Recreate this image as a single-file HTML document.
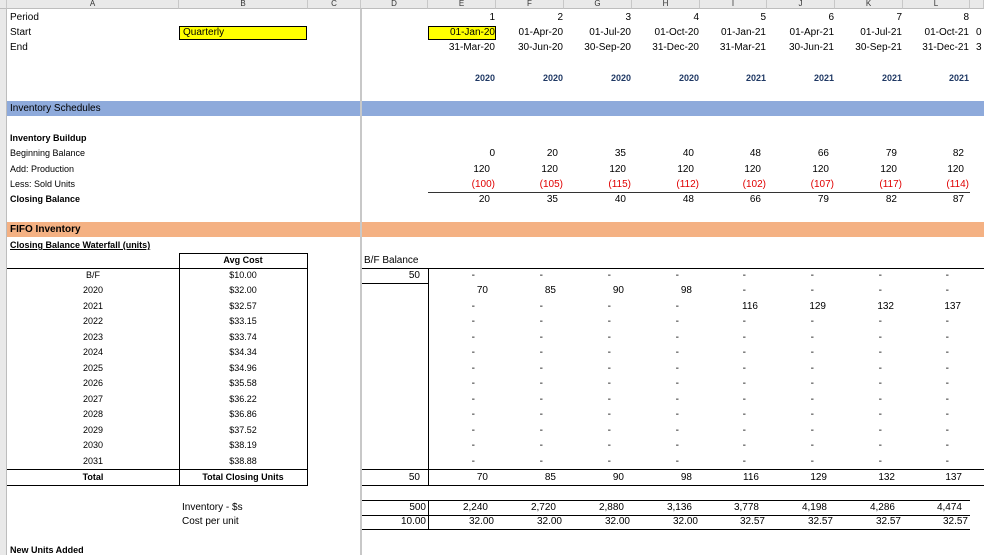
<!DOCTYPE html>
<html><head><meta charset="utf-8"><style>
*{margin:0;padding:0;box-sizing:border-box}
body{width:984px;height:555px;overflow:hidden;background:#fff;font-family:"Liberation Sans",Arial,sans-serif;font-size:10px;color:#000;position:relative}
div{position:absolute;white-space:nowrap}
.t{height:15px;line-height:15px}
.r{text-align:right;width:70px}
.c{text-align:center}
.b{font-weight:bold}
.h{top:0;height:9px;background:#e9e9e9;border-bottom:1px solid #bdbdbd;border-right:1px solid #c8c8c8;font-size:8px;line-height:7px;text-align:center;color:#333;overflow:hidden}
.hl{height:1px;background:#000}
.vl{width:1px;background:#000}
.y{color:#1f3864;font-weight:bold;font-size:9px}
.red{color:#e00000}
</style></head><body>
<!-- column headers -->
<div class="h" style="left:0;width:7px"></div>
<div class="h" style="left:7px;width:172px">A</div>
<div class="h" style="left:179px;width:129px">B</div>
<div class="h" style="left:308px;width:53px">C</div>
<div class="h" style="left:361px;width:67px">D</div>
<div class="h" style="left:428px;width:68px">E</div>
<div class="h" style="left:496px;width:68px">F</div>
<div class="h" style="left:564px;width:68px">G</div>
<div class="h" style="left:632px;width:68px">H</div>
<div class="h" style="left:700px;width:67px">I</div>
<div class="h" style="left:767px;width:68px">J</div>
<div class="h" style="left:835px;width:68px">K</div>
<div class="h" style="left:903px;width:67px">L</div>
<div class="h" style="left:970px;width:14px"></div>
<!-- row gutter -->
<div style="left:0;top:9px;width:7px;height:546px;background:#e9e9e9;border-right:1px solid #bdbdbd"></div>
<!-- freeze line -->
<div style="left:360px;top:9px;width:2px;height:546px;background:#c8c8c8"></div>

<!-- bands -->
<div style="left:7px;top:101px;width:353px;height:15px;background:#8eaadb"></div>
<div style="left:362px;top:101px;width:622px;height:15px;background:#8eaadb"></div>
<div class="t" style="left:10px;top:101px">Inventory Schedules</div>
<div style="left:7px;top:222px;width:353px;height:15px;background:#f4b183"></div>
<div style="left:362px;top:222px;width:622px;height:15px;background:#f4b183"></div>
<div class="t b" style="left:10px;top:222px">FIFO Inventory</div>

<!-- top labels -->
<div class="t" style="left:10px;top:10px">Period</div>
<div class="t" style="left:10px;top:25px">Start</div>
<div class="t" style="left:10px;top:40px">End</div>
<div style="left:179px;top:26px;width:128px;height:14px;background:#ffff00;border:1px solid #000;line-height:12px;padding-left:3px">Quarterly</div>
<div style="left:428px;top:26px;width:68px;height:14px;background:#ffff00;border:1px solid #000"></div>

<!-- period row -->
<div class="t r" style="left:425px;top:10px">1</div>
<div class="t r" style="left:493px;top:10px">2</div>
<div class="t r" style="left:561px;top:10px">3</div>
<div class="t r" style="left:629px;top:10px">4</div>
<div class="t r" style="left:696px;top:10px">5</div>
<div class="t r" style="left:764px;top:10px">6</div>
<div class="t r" style="left:832px;top:10px">7</div>
<div class="t r" style="left:899px;top:10px">8</div>
<div class="t r" style="left:425px;top:25px">01-Jan-20</div>
<div class="t r" style="left:493px;top:25px">01-Apr-20</div>
<div class="t r" style="left:561px;top:25px">01-Jul-20</div>
<div class="t r" style="left:629px;top:25px">01-Oct-20</div>
<div class="t r" style="left:696px;top:25px">01-Jan-21</div>
<div class="t r" style="left:764px;top:25px">01-Apr-21</div>
<div class="t r" style="left:832px;top:25px">01-Jul-21</div>
<div class="t r" style="left:899px;top:25px">01-Oct-21</div>
<div class="t" style="left:976px;top:25px">0</div>
<div class="t r" style="left:425px;top:40px">31-Mar-20</div>
<div class="t r" style="left:493px;top:40px">30-Jun-20</div>
<div class="t r" style="left:561px;top:40px">30-Sep-20</div>
<div class="t r" style="left:629px;top:40px">31-Dec-20</div>
<div class="t r" style="left:696px;top:40px">31-Mar-21</div>
<div class="t r" style="left:764px;top:40px">30-Jun-21</div>
<div class="t r" style="left:832px;top:40px">30-Sep-21</div>
<div class="t r" style="left:899px;top:40px">31-Dec-21</div>
<div class="t" style="left:976px;top:40px">3</div>
<div class="t r y" style="left:425px;top:71px">2020</div>
<div class="t r y" style="left:493px;top:71px">2020</div>
<div class="t r y" style="left:561px;top:71px">2020</div>
<div class="t r y" style="left:629px;top:71px">2020</div>
<div class="t r y" style="left:696px;top:71px">2021</div>
<div class="t r y" style="left:764px;top:71px">2021</div>
<div class="t r y" style="left:832px;top:71px">2021</div>
<div class="t r y" style="left:899px;top:71px">2021</div>

<!-- inventory buildup -->
<div class="t b" style="left:10px;top:131px;font-size:9px">Inventory Buildup</div>
<div class="t" style="left:10px;top:146px;font-size:9px">Beginning Balance</div>
<div class="t" style="left:10px;top:162px;font-size:9px">Add: Production</div>
<div class="t" style="left:10px;top:177px;font-size:9px">Less: Sold Units</div>
<div class="t b" style="left:10px;top:192px;font-size:9px">Closing Balance</div>

<div class="t r" style="left:425px;top:146px">0</div>
<div class="t r" style="left:488px;top:146px">20</div>
<div class="t r" style="left:556px;top:146px">35</div>
<div class="t r" style="left:624px;top:146px">40</div>
<div class="t r" style="left:691px;top:146px">48</div>
<div class="t r" style="left:759px;top:146px">66</div>
<div class="t r" style="left:827px;top:146px">79</div>
<div class="t r" style="left:894px;top:146px">82</div>

<div class="t r" style="left:420px;top:162px">120</div>
<div class="t r" style="left:488px;top:162px">120</div>
<div class="t r" style="left:556px;top:162px">120</div>
<div class="t r" style="left:624px;top:162px">120</div>
<div class="t r" style="left:691px;top:162px">120</div>
<div class="t r" style="left:759px;top:162px">120</div>
<div class="t r" style="left:827px;top:162px">120</div>
<div class="t r" style="left:894px;top:162px">120</div>

<div class="t r red" style="left:425px;top:177px">(100)</div>
<div class="t r red" style="left:493px;top:177px">(105)</div>
<div class="t r red" style="left:561px;top:177px">(115)</div>
<div class="t r red" style="left:629px;top:177px">(112)</div>
<div class="t r red" style="left:696px;top:177px">(102)</div>
<div class="t r red" style="left:764px;top:177px">(107)</div>
<div class="t r red" style="left:832px;top:177px">(117)</div>
<div class="t r red" style="left:899px;top:177px">(114)</div>
<div class="hl" style="left:428px;top:192px;width:542px;background:#333"></div>

<div class="t r" style="left:420px;top:192px">20</div>
<div class="t r" style="left:488px;top:192px">35</div>
<div class="t r" style="left:556px;top:192px">40</div>
<div class="t r" style="left:624px;top:192px">48</div>
<div class="t r" style="left:691px;top:192px">66</div>
<div class="t r" style="left:759px;top:192px">79</div>
<div class="t r" style="left:827px;top:192px">82</div>
<div class="t r" style="left:894px;top:192px">87</div>

<!-- waterfall -->
<div class="t b" style="left:10px;top:238px;font-size:9px;text-decoration:underline">Closing Balance Waterfall (units)</div>
<div class="t" style="left:364px;top:253px">B/F Balance</div>
<!-- left tables -->
<div class="hl" style="left:179px;top:253px;width:129px"></div>
<div class="hl" style="left:7px;top:268px;width:301px"></div>
<div class="vl" style="left:179px;top:253px;height:232px"></div>
<div class="vl" style="left:307px;top:253px;height:232px"></div>
<div class="hl" style="left:7px;top:469px;width:301px"></div>
<div class="hl" style="left:7px;top:485px;width:301px"></div>
<div class="t c b" style="left:179px;top:253px;width:128px;font-size:9px">Avg Cost</div>

<div class="t c" style="left:7px;top:268px;width:172px;font-size:9px">B/F</div>
<div class="t c" style="left:7px;top:283px;width:172px;font-size:9px">2020</div>
<div class="t c" style="left:7px;top:299px;width:172px;font-size:9px">2021</div>
<div class="t c" style="left:7px;top:314px;width:172px;font-size:9px">2022</div>
<div class="t c" style="left:7px;top:330px;width:172px;font-size:9px">2023</div>
<div class="t c" style="left:7px;top:345px;width:172px;font-size:9px">2024</div>
<div class="t c" style="left:7px;top:361px;width:172px;font-size:9px">2025</div>
<div class="t c" style="left:7px;top:376px;width:172px;font-size:9px">2026</div>
<div class="t c" style="left:7px;top:392px;width:172px;font-size:9px">2027</div>
<div class="t c" style="left:7px;top:407px;width:172px;font-size:9px">2028</div>
<div class="t c" style="left:7px;top:423px;width:172px;font-size:9px">2029</div>
<div class="t c" style="left:7px;top:438px;width:172px;font-size:9px">2030</div>
<div class="t c" style="left:7px;top:454px;width:172px;font-size:9px">2031</div>
<div class="t c b" style="left:7px;top:470px;width:172px;font-size:9px">Total</div>

<div class="t c" style="left:179px;top:268px;width:128px;font-size:9px">$10.00</div>
<div class="t c" style="left:179px;top:283px;width:128px;font-size:9px">$32.00</div>
<div class="t c" style="left:179px;top:299px;width:128px;font-size:9px">$32.57</div>
<div class="t c" style="left:179px;top:314px;width:128px;font-size:9px">$33.15</div>
<div class="t c" style="left:179px;top:330px;width:128px;font-size:9px">$33.74</div>
<div class="t c" style="left:179px;top:345px;width:128px;font-size:9px">$34.34</div>
<div class="t c" style="left:179px;top:361px;width:128px;font-size:9px">$34.96</div>
<div class="t c" style="left:179px;top:376px;width:128px;font-size:9px">$35.58</div>
<div class="t c" style="left:179px;top:392px;width:128px;font-size:9px">$36.22</div>
<div class="t c" style="left:179px;top:407px;width:128px;font-size:9px">$36.86</div>
<div class="t c" style="left:179px;top:423px;width:128px;font-size:9px">$37.52</div>
<div class="t c" style="left:179px;top:438px;width:128px;font-size:9px">$38.19</div>
<div class="t c" style="left:179px;top:454px;width:128px;font-size:9px">$38.88</div>
<div class="t c b" style="left:179px;top:470px;width:128px;font-size:9px">Total Closing Units</div>

<!-- right waterfall lines -->
<div class="hl" style="left:362px;top:268px;width:622px"></div>
<div class="hl" style="left:362px;top:283px;width:66px"></div>
<div class="vl" style="left:428px;top:268px;height:217px"></div>
<div class="hl" style="left:362px;top:469px;width:622px"></div>
<div class="hl" style="left:362px;top:485px;width:622px"></div>
<div class="t r" style="left:350px;top:268px">50</div>

<!-- dashes/values rows -->
<div class="t r" style="left:405px;top:268px">-</div><div class="t r" style="left:473px;top:268px">-</div><div class="t r" style="left:541px;top:268px">-</div><div class="t r" style="left:609px;top:268px">-</div><div class="t r" style="left:676px;top:268px">-</div><div class="t r" style="left:744px;top:268px">-</div><div class="t r" style="left:812px;top:268px">-</div><div class="t r" style="left:879px;top:268px">-</div>
<div class="t r" style="left:418px;top:283px">70</div><div class="t r" style="left:486px;top:283px">85</div><div class="t r" style="left:554px;top:283px">90</div><div class="t r" style="left:622px;top:283px">98</div><div class="t r" style="left:676px;top:283px">-</div><div class="t r" style="left:744px;top:283px">-</div><div class="t r" style="left:812px;top:283px">-</div><div class="t r" style="left:879px;top:283px">-</div>
<div class="t r" style="left:405px;top:299px">-</div><div class="t r" style="left:473px;top:299px">-</div><div class="t r" style="left:541px;top:299px">-</div><div class="t r" style="left:609px;top:299px">-</div><div class="t r" style="left:688px;top:299px">116</div><div class="t r" style="left:756px;top:299px">129</div><div class="t r" style="left:824px;top:299px">132</div><div class="t r" style="left:891px;top:299px">137</div>
<div class="t r" style="left:405px;top:314px">-</div><div class="t r" style="left:473px;top:314px">-</div><div class="t r" style="left:541px;top:314px">-</div><div class="t r" style="left:609px;top:314px">-</div><div class="t r" style="left:676px;top:314px">-</div><div class="t r" style="left:744px;top:314px">-</div><div class="t r" style="left:812px;top:314px">-</div><div class="t r" style="left:879px;top:314px">-</div>
<div class="t r" style="left:405px;top:330px">-</div><div class="t r" style="left:473px;top:330px">-</div><div class="t r" style="left:541px;top:330px">-</div><div class="t r" style="left:609px;top:330px">-</div><div class="t r" style="left:676px;top:330px">-</div><div class="t r" style="left:744px;top:330px">-</div><div class="t r" style="left:812px;top:330px">-</div><div class="t r" style="left:879px;top:330px">-</div>
<div class="t r" style="left:405px;top:345px">-</div><div class="t r" style="left:473px;top:345px">-</div><div class="t r" style="left:541px;top:345px">-</div><div class="t r" style="left:609px;top:345px">-</div><div class="t r" style="left:676px;top:345px">-</div><div class="t r" style="left:744px;top:345px">-</div><div class="t r" style="left:812px;top:345px">-</div><div class="t r" style="left:879px;top:345px">-</div>
<div class="t r" style="left:405px;top:361px">-</div><div class="t r" style="left:473px;top:361px">-</div><div class="t r" style="left:541px;top:361px">-</div><div class="t r" style="left:609px;top:361px">-</div><div class="t r" style="left:676px;top:361px">-</div><div class="t r" style="left:744px;top:361px">-</div><div class="t r" style="left:812px;top:361px">-</div><div class="t r" style="left:879px;top:361px">-</div>
<div class="t r" style="left:405px;top:376px">-</div><div class="t r" style="left:473px;top:376px">-</div><div class="t r" style="left:541px;top:376px">-</div><div class="t r" style="left:609px;top:376px">-</div><div class="t r" style="left:676px;top:376px">-</div><div class="t r" style="left:744px;top:376px">-</div><div class="t r" style="left:812px;top:376px">-</div><div class="t r" style="left:879px;top:376px">-</div>
<div class="t r" style="left:405px;top:392px">-</div><div class="t r" style="left:473px;top:392px">-</div><div class="t r" style="left:541px;top:392px">-</div><div class="t r" style="left:609px;top:392px">-</div><div class="t r" style="left:676px;top:392px">-</div><div class="t r" style="left:744px;top:392px">-</div><div class="t r" style="left:812px;top:392px">-</div><div class="t r" style="left:879px;top:392px">-</div>
<div class="t r" style="left:405px;top:407px">-</div><div class="t r" style="left:473px;top:407px">-</div><div class="t r" style="left:541px;top:407px">-</div><div class="t r" style="left:609px;top:407px">-</div><div class="t r" style="left:676px;top:407px">-</div><div class="t r" style="left:744px;top:407px">-</div><div class="t r" style="left:812px;top:407px">-</div><div class="t r" style="left:879px;top:407px">-</div>
<div class="t r" style="left:405px;top:423px">-</div><div class="t r" style="left:473px;top:423px">-</div><div class="t r" style="left:541px;top:423px">-</div><div class="t r" style="left:609px;top:423px">-</div><div class="t r" style="left:676px;top:423px">-</div><div class="t r" style="left:744px;top:423px">-</div><div class="t r" style="left:812px;top:423px">-</div><div class="t r" style="left:879px;top:423px">-</div>
<div class="t r" style="left:405px;top:438px">-</div><div class="t r" style="left:473px;top:438px">-</div><div class="t r" style="left:541px;top:438px">-</div><div class="t r" style="left:609px;top:438px">-</div><div class="t r" style="left:676px;top:438px">-</div><div class="t r" style="left:744px;top:438px">-</div><div class="t r" style="left:812px;top:438px">-</div><div class="t r" style="left:879px;top:438px">-</div>
<div class="t r" style="left:405px;top:454px">-</div><div class="t r" style="left:473px;top:454px">-</div><div class="t r" style="left:541px;top:454px">-</div><div class="t r" style="left:609px;top:454px">-</div><div class="t r" style="left:676px;top:454px">-</div><div class="t r" style="left:744px;top:454px">-</div><div class="t r" style="left:812px;top:454px">-</div><div class="t r" style="left:879px;top:454px">-</div>

<!-- totals -->
<div class="t r" style="left:350px;top:470px">50</div>
<div class="t r" style="left:418px;top:470px">70</div>
<div class="t r" style="left:486px;top:470px">85</div>
<div class="t r" style="left:554px;top:470px">90</div>
<div class="t r" style="left:622px;top:470px">98</div>
<div class="t r" style="left:689px;top:470px">116</div>
<div class="t r" style="left:757px;top:470px">129</div>
<div class="t r" style="left:825px;top:470px">132</div>
<div class="t r" style="left:892px;top:470px">137</div>

<!-- inventory $ -->
<div class="t" style="left:182px;top:500px">Inventory - $s</div>
<div class="t" style="left:182px;top:514px">Cost per unit</div>
<div class="hl" style="left:362px;top:500px;width:608px"></div>
<div class="hl" style="left:362px;top:515px;width:608px"></div>
<div class="hl" style="left:362px;top:529px;width:608px"></div>
<div class="vl" style="left:428px;top:500px;height:30px"></div>
<div class="t r" style="left:356px;top:500px">500</div>
<div class="t r" style="left:418px;top:500px">2,240</div>
<div class="t r" style="left:486px;top:500px">2,720</div>
<div class="t r" style="left:554px;top:500px">2,880</div>
<div class="t r" style="left:622px;top:500px">3,136</div>
<div class="t r" style="left:689px;top:500px">3,778</div>
<div class="t r" style="left:757px;top:500px">4,198</div>
<div class="t r" style="left:825px;top:500px">4,286</div>
<div class="t r" style="left:892px;top:500px">4,474</div>
<div class="t r" style="left:356px;top:514px">10.00</div>
<div class="t r" style="left:424px;top:514px">32.00</div>
<div class="t r" style="left:492px;top:514px">32.00</div>
<div class="t r" style="left:560px;top:514px">32.00</div>
<div class="t r" style="left:628px;top:514px">32.00</div>
<div class="t r" style="left:695px;top:514px">32.57</div>
<div class="t r" style="left:763px;top:514px">32.57</div>
<div class="t r" style="left:831px;top:514px">32.57</div>
<div class="t r" style="left:898px;top:514px">32.57</div>

<div class="t b" style="left:10px;top:543px;font-size:9px">New Units Added</div>
</body></html>
